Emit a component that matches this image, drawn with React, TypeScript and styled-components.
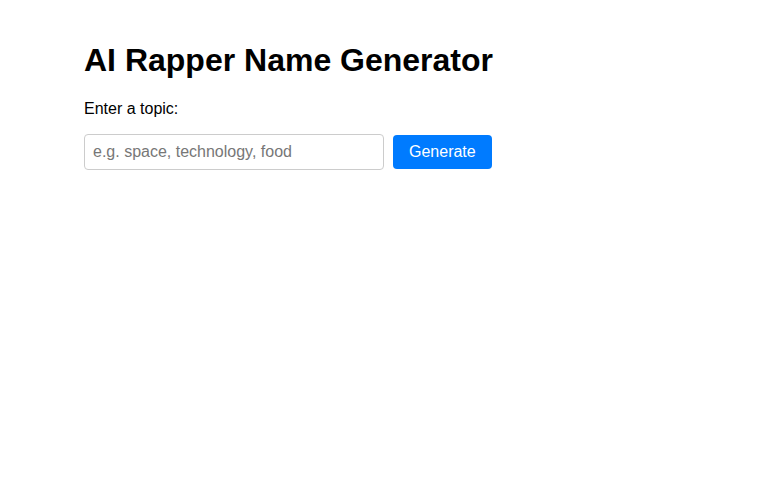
import React, { useState } from 'react';
import styled, { createGlobalStyle } from 'styled-components';

const GlobalStyle = createGlobalStyle`
  body {
    margin: 0;
    background: #ffffff;
    font-family: "Liberation Sans", Arial, sans-serif;
    color: #000000;
  }
`;

const Container = styled.main`
  max-width: 600px;
  margin: 0 auto;
  padding-top: 42px;
`;

const Title = styled.h1`
  font-size: 32px;
  font-weight: bold;
  margin: 0 0 21px;
`;

const Label = styled.label`
  display: block;
  font-size: 16px;
  margin-bottom: 16px;
`;

const Row = styled.div`
  display: flex;
  align-items: center;
  gap: 9px;
`;

const TopicInput = styled.input`
  box-sizing: border-box;
  width: 300px;
  height: 36px;
  padding: 8px;
  font-family: inherit;
  font-size: 16px;
  border: 1px solid #cccccc;
  border-radius: 4px;
  outline: none;

  &::placeholder {
    color: #777777;
  }
`;

const GenerateButton = styled.button`
  height: 34px;
  padding: 0 16px;
  font-family: inherit;
  font-size: 16px;
  color: #ffffff;
  background: #007bff;
  border: none;
  border-radius: 4px;
  cursor: pointer;
`;

export default function App() {
  const [topic, setTopic] = useState('');

  return (
    <>
      <GlobalStyle />
      <Container>
        <Title>AI Rapper Name Generator</Title>
        <Label htmlFor="topic">Enter a topic:</Label>
        <Row>
          <TopicInput
            id="topic"
            value={topic}
            onChange={(e) => setTopic(e.target.value)}
            placeholder="e.g. space, technology, food"
          />
          <GenerateButton>Generate</GenerateButton>
        </Row>
      </Container>
    </>
  );
}
